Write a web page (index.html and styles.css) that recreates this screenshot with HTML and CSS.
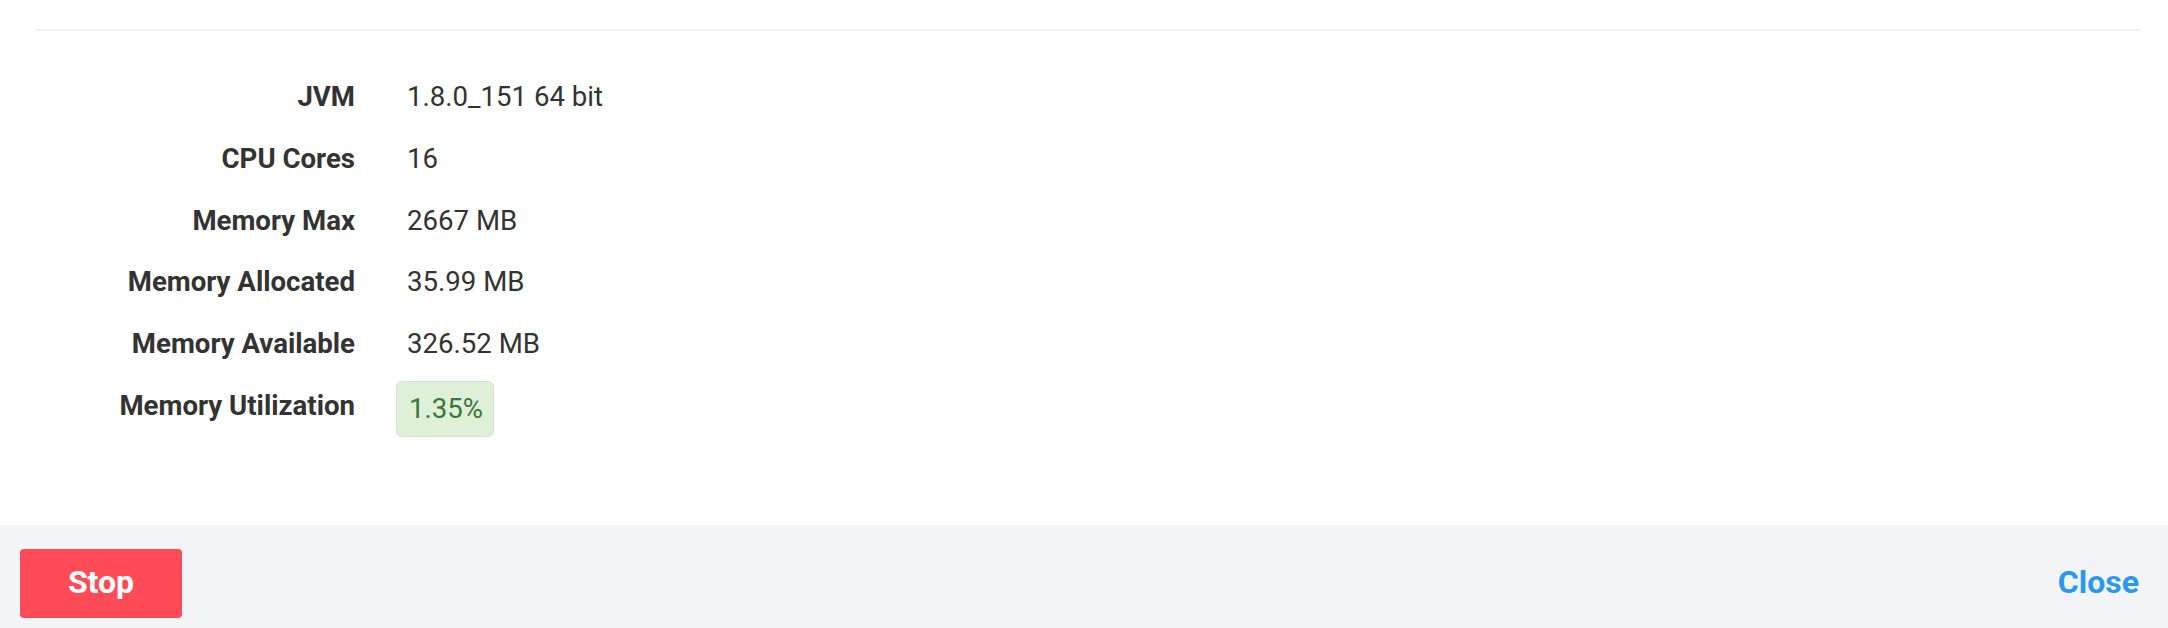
FILE: index.html
```html
<!DOCTYPE html>
<html>
<head>
<meta charset="utf-8">
<link rel="stylesheet" href="styles.css">
</head>
<body>
<div class="modal">
  <div class="modal-body">
    <div class="divider"></div>
    <div class="info">
      <div class="row"><div class="label">JVM</div><div class="value">1.8.0_151 64 bit</div></div>
      <div class="row"><div class="label">CPU Cores</div><div class="value">16</div></div>
      <div class="row"><div class="label">Memory Max</div><div class="value">2667 MB</div></div>
      <div class="row"><div class="label">Memory Allocated</div><div class="value">35.99 MB</div></div>
      <div class="row"><div class="label">Memory Available</div><div class="value">326.52 MB</div></div>
      <div class="row"><div class="label">Memory Utilization</div><div class="value value-badge"><span class="badge">1.35%</span></div></div>
    </div>
  </div>
  <div class="modal-footer">
    <button class="btn-stop">Stop</button>
    <button class="btn-close">Close</button>
  </div>
</div>
</body>
</html>
```

FILE: styles.css
```css
html, body {
  margin: 0;
  padding: 0;
  background: #ffffff;
  font-family: Roboto, "Liberation Sans", sans-serif;
  color: #333333;
}

.modal {
  display: flex;
  flex-direction: column;
  height: 628px;
  overflow: hidden;
}

.modal-body {
  height: 525px;
  padding: 29px 28px 0 36px;
  box-sizing: border-box;
}

.divider {
  height: 2px;
  background: #efefef;
}

.info {
  margin-top: 35px;
  display: flex;
  flex-direction: column;
}

.row {
  display: flex;
  align-items: center;
  height: 61.8px;
  font-size: 27.6px;
}

.label {
  width: 319px;
  text-align: right;
  font-weight: 700;
  line-height: 61.8px;
}

.value {
  margin-left: 41px;
  padding-left: 11px;
  line-height: 61.8px;
  font-weight: 400;
}

.value-badge {
  padding-left: 0;
  display: flex;
  align-items: center;
  line-height: normal;
}

.badge {
  display: inline-block;
  margin-top: 6px;
  padding: 12px 12px;
  line-height: 30px;
  height: 30px;
  width: 72px;
  text-align: center;
  background: #dff0d8;
  border: 1px solid #cfe7c4;
  border-radius: 6px;
  color: #3c763d;
}

.modal-footer {
  flex: 1;
  background: #f3f4f6;
  display: flex;
  justify-content: space-between;
  align-items: flex-start;
  padding: 24px 29px 0 20px;
}

.btn-stop {
  width: 162px;
  height: 69px;
  border: none;
  border-radius: 4px;
  background: #ff4a57;
  color: #ffffff;
  font-family: Roboto, "Liberation Sans", sans-serif;
  font-weight: 700;
  font-size: 32px;
  padding: 0 0 3px 0;
}

.btn-close {
  height: 69px;
  border: none;
  background: transparent;
  color: #2b98f0;
  font-family: Roboto, "Liberation Sans", sans-serif;
  font-weight: 700;
  font-size: 32px;
  padding: 0 0 3px 0;
}
```
